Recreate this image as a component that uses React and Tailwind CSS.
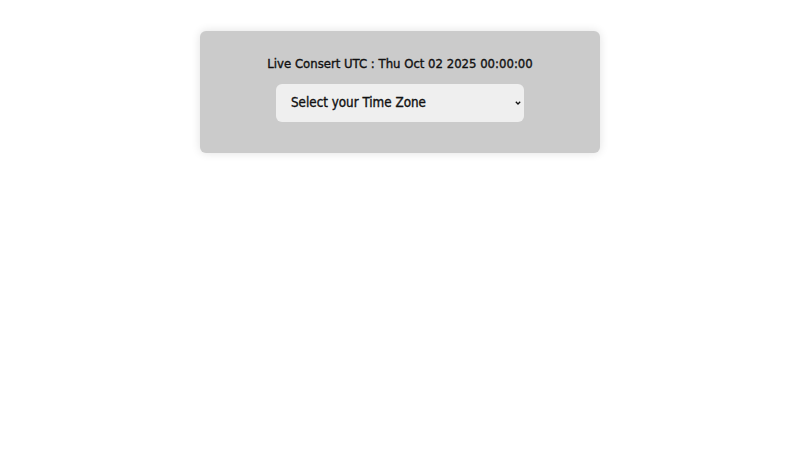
export default function App() {
  return (
    <div
      className="min-h-screen bg-white"
      style={{ fontFamily: '"DejaVu Sans Condensed", "Liberation Sans Narrow", sans-serif' }}
    >
      <div className="flex justify-center pt-[31px]">
        {/* Timezone card */}
        <div className="w-[400px] rounded-md bg-[#cbcbcb] shadow-[0_0_10px_rgba(0,0,0,0.12)] flex flex-col items-center pt-[23px] pb-[31px] gap-[10px]">
          <p className="text-[13px] leading-[20px] text-[#111] [-webkit-text-stroke:0.35px_#111]">
            Live Consert UTC : Thu Oct 02 2025 00:00:00
          </p>
          <div className="relative">
            <select
              defaultValue=""
              className="appearance-none w-[248px] h-[38px] rounded-md bg-[#efefef] pl-[15px] pr-[16px] text-[13.3px] text-[#111] outline-none [-webkit-text-stroke:0.35px_#111]"
              style={{ fontFamily: 'inherit' }}
            >
              <option value="">Select your Time Zone</option>
              <option value="utc">UTC</option>
              <option value="est">America/New_York</option>
              <option value="cet">Europe/Paris</option>
              <option value="jst">Asia/Tokyo</option>
            </select>
            <svg
              className="pointer-events-none absolute right-[3px] top-[17px]"
              width="6"
              height="4"
              viewBox="0 0 6 4"
              fill="none"
            >
              <path d="M0.8 0.8 L3 3 L5.2 0.8" stroke="#111" strokeWidth="1.3" />
            </svg>
          </div>
        </div>
      </div>
    </div>
  );
}
